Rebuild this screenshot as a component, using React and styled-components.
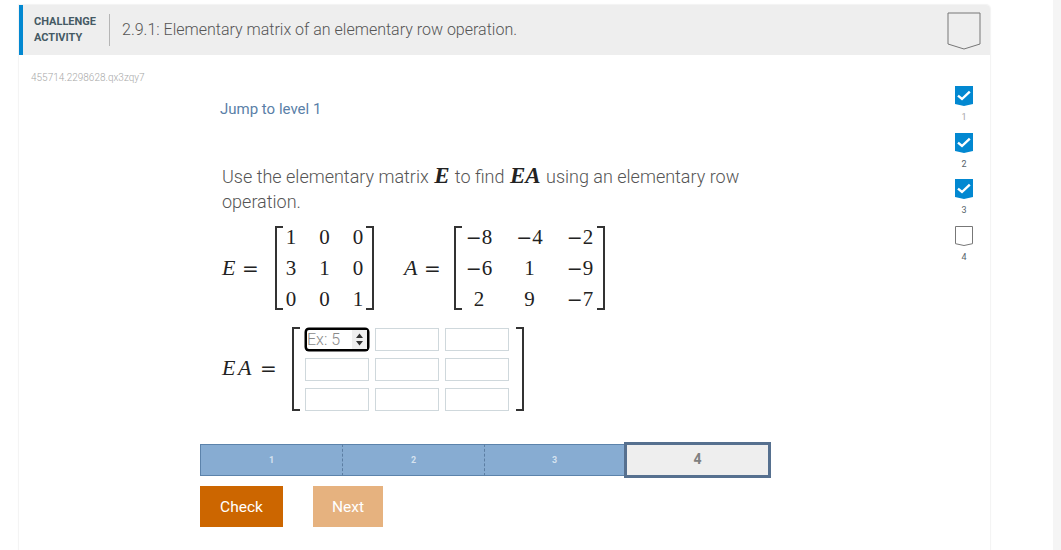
import React from "react";
import styled, { createGlobalStyle } from "styled-components";

const Global = createGlobalStyle`
  html, body { margin: 0; padding: 0; background: #fff; height: 550px; overflow: hidden; }
  body { font-family: Roboto, "Liberation Sans", sans-serif; color: #4a4a4a; }
  * { box-sizing: border-box; }
`;

const Page = styled.div`
  display: flex;
  width: 1061px;
  height: 550px;
  overflow: hidden;
`;
const Card = styled.section`
  width: 971px;
  margin: 5px 0 0 19px;
  height: 560px;
  background: #fff;
  border-radius: 0 4px 0 0;
  box-shadow: 0 0 1px 1px #f3f3f3;
  display: flex;
  flex-direction: column;
`;
const Gutter = styled.div`
  width: 8px;
  margin-left: 63px;
  background: #f5f5f5;
`;
const Header = styled.header`
  height: 50px;
  flex: none;
  background: #eeeeee;
  border-left: 4px solid #0288d1;
  border-radius: 0 4px 0 0;
  display: flex;
  align-items: center;
  padding-left: 11px;
`;
const Kind = styled.div`
  width: 75px;
  font: 700 11px/16px Roboto, sans-serif;
  color: #455a64;
`;
const Rule = styled.div`
  width: 1px;
  height: 32px;
  background: #b5b5b5;
  margin-right: 12px;
`;
const Title = styled.h1`
  margin: 0;
  flex: 1;
  font: 300 16px/20px Roboto, sans-serif;
  color: #555;
`;
const BigRibbon = styled.svg`
  width: 34px;
  height: 38px;
  margin-right: 9px;
  margin-top: 1px;
`;
const Body = styled.div`
  display: flex;
  flex: 1;
`;
const Main = styled.div`
  flex: 1;
  padding-top: 17px;
`;
const Seed = styled.div`
  font: 300 10px/12px Roboto, sans-serif;
  color: #a8a8a8;
  padding-left: 12px;
`;
const Exercise = styled.div`
  width: 571px;
  margin-left: 181px;
  padding-top: 14px;
`;
const Jump = styled.div`
  font: 400 15px/20px Roboto, sans-serif;
  color: #5a7fa8;
  margin: 1px 0 0 20px;
  height: 20px;
`;
const Prompt = styled.p`
  margin: 45px 0 0 22px;
  width: 530px;
  font: 300 18px/25px Roboto, sans-serif;
  color: #555;
`;
const MathVar = styled.span`
  font: italic 700 23px/20px "Liberation Serif", serif;
  color: #222;
  margin: 0 1px;
`;
const Equations = styled.div`
  display: flex;
  align-items: center;
  margin: 12px 0 0 22px;
  height: 84px;
  font-family: "Liberation Serif", serif;
  font-size: 21px;
  color: #222;
`;
const Lhs = styled.span`
  width: ${(p) => p.$w}px;
  margin-left: ${(p) => p.$ml || 0}px;
  padding-bottom: ${(p) => p.$pb || 0}px;
  flex: none;
  white-space: nowrap;
  display: flex;
  align-items: baseline;
  color: #222;
`;
const Ital = styled.i`
  font: italic 400 22px/1 "Liberation Serif", serif;
  letter-spacing: ${(p) => p.$ls ?? 1.5}px;
`;
const Op = styled.span`
  font: 400 20px/1 "DejaVu Sans", sans-serif;
  margin-left: ${(p) => p.$ml ?? 5}px;
`;
const Bracketed = styled.div`
  display: flex;
  align-self: stretch;
  flex: none;
`;
const Bracket = styled.div`
  width: 8px;
  flex: none;
  border: solid #333;
  border-width: 2px 0 2px 2px;
  ${(p) => p.$right && "border-width: 2px 2px 2px 0;"}
`;
const Matrix = styled.div`
  display: grid;
  grid-template-columns: repeat(3, ${(p) => p.$col}px);
  column-gap: ${(p) => p.$gap}px;
  grid-auto-rows: 31px;
  align-items: center;
  justify-items: center;
  padding: 0 ${(p) => p.$pad}px;
  align-content: center;
  font-size: 21px;
  line-height: 1;
`;
const Entry = styled.span`
  white-space: nowrap;
`;
const Minus = styled.span`
  font-family: "DejaVu Sans", sans-serif;
  font-size: 19px;
`;
const Answer = styled.div`
  display: flex;
  align-items: center;
  height: 84px;
  margin: 17px 0 0 22px;
`;
const InputGrid = styled.div`
  display: grid;
  grid-template-columns: repeat(3, 64px);
  grid-auto-rows: 23px;
  gap: 7px 6px;
  padding: 1px 7px 0 5px;
`;
const Cell = styled.input`
  width: 64px;
  height: 23px;
  padding: 0 2px;
  margin: 0;
  background: #fff;
  border: 1px solid #cfd8dc;
  border-radius: 0;
  outline: none;
  font: 300 15px/21px Roboto, sans-serif;
`;
const Focused = styled.div`
  position: relative;
  width: 64px;
  height: 23px;
  border: 2px solid #000;
  border-radius: 4px;
  background: #fff;
  box-shadow: 0 0 0 0.5px #000;
  font: 300 16px/19px Roboto, sans-serif;
  color: #8a8a8a;
  padding-left: 0;
`;
const Spin = styled.svg`
  position: absolute;
  right: 0;
  top: 0;
  width: 15px;
  height: 19px;
  background: #efefef;
`;
const Progress = styled.div`
  display: flex;
  align-items: center;
  height: 36px;
  margin-top: 31px;
`;
const Segment = styled.div`
  width: ${(p) => p.$w}px;
  height: 32px;
  flex: none;
  background: #87acd2;
  border: solid #5c83ab;
  border-width: 1px 0 1px ${(p) => (p.$first ? 1 : 0)}px;
  ${(p) => !p.$first && "border-left: 1px dashed #5c7ea3;"}
  color: #d5e2ef;
  font: 700 9px/30px Roboto, sans-serif;
  text-align: center;
`;
const Current = styled.div`
  width: 147px;
  height: 36px;
  flex: none;
  background: #eeeeee;
  border: 3px solid #56708f;
  color: #808080;
  font: 700 14px/28px Roboto, sans-serif;
  text-align: center;
`;
const Actions = styled.div`
  display: flex;
  gap: 30px;
  margin-top: 8px;
`;
const Button = styled.button`
  width: ${(p) => p.$w}px;
  height: 41px;
  border: none;
  padding: 2px 0 0;
  background: ${(p) => p.$bg};
  color: #fff;
  font: 400 15.5px/39px Roboto, sans-serif;
`;
const Rail = styled.aside`
  width: 52px;
  flex: none;
  padding-top: 31px;
  padding-right: 17px;
  display: flex;
  flex-direction: column;
  align-items: flex-end;
`;
const Level = styled.div`
  width: 18px;
  height: 46.5px;
  display: flex;
  flex-direction: column;
  align-items: center;
`;
const LevelNum = styled.span`
  font: 400 9px/10px Roboto, sans-serif;
  color: ${(p) => p.$c || "#56616a"};
  margin-top: 6px;
`;
const Mini = styled.svg`
  width: 18px;
  height: 20px;
  flex: none;
`;

const Done = () => (
  <Mini viewBox="0 0 18 20">
    <path d="M0 0H18V18L9 20L0 18Z" fill="#0288d1" />
    <path d="M3 9.6L7 13L14.8 5.6" fill="none" stroke="#fff" strokeWidth="2.4" />
  </Mini>
);
const Todo = () => (
  <Mini viewBox="0 0 18 20">
    <path d="M.5.5H17.5V17.7L9 19.5L.5 17.7Z" fill="#fff" stroke="#777" />
  </Mini>
);

const E = [["1", "0", "0"], ["3", "1", "0"], ["0", "0", "1"]];
const A = [["-8", "-4", "-2"], ["-6", "1", "-9"], ["2", "9", "-7"]];

const Value = ({ v }) =>
  v[0] === "-" ? (
    <Entry>
      <Minus>−</Minus>
      {v.slice(1)}
    </Entry>
  ) : (
    <Entry>{v}</Entry>
  );

const Grid = ({ rows, col, gap, pad }) => (
  <Bracketed>
    <Bracket />
    <Matrix $col={col} $gap={gap} $pad={pad}>
      {rows.flat().map((v, i) => (
        <Value key={i} v={v} />
      ))}
    </Matrix>
    <Bracket $right />
  </Bracketed>
);

export default function App() {
  return (
    <Page>
      <Global />
      <Card>
        <Header>
          <Kind>CHALLENGE ACTIVITY</Kind>
          <Rule />
          <Title>2.9.1: Elementary matrix of an elementary row operation.</Title>
          <BigRibbon viewBox="0 0 34 38">
            <path d="M1 1H33V32L17 37L1 32Z" fill="#eee" stroke="#777" />
          </BigRibbon>
        </Header>
        <Body>
          <Main>
            <Seed>455714.2298628.qx3zqy7</Seed>
            <Exercise>
              <Jump>Jump to level 1</Jump>
              <Prompt>
                Use the elementary matrix <MathVar>E</MathVar> to find <MathVar>EA</MathVar> using an elementary row operation.
              </Prompt>
              <Equations>
                <Lhs $w={53}>
                  <Ital>E</Ital>
                  <Op>=</Op>
                </Lhs>
                <Grid rows={E} col={16} gap={17.5} pad={0} />
                <Lhs $w={50} $ml={30}>
                  <Ital>A</Ital>
                  <Op>=</Op>
                </Lhs>
                <Grid rows={A} col={26} gap={24.5} pad={4} />
              </Equations>
              <Answer>
                <Lhs $w={70} $pb={2}>
                  <Ital $ls={2.5}>EA</Ital>
                  <Op $ml={6}>=</Op>
                </Lhs>
                <Bracketed>
                  <Bracket />
                  <InputGrid>
                    <Focused>
                      Ex: 5
                      <Spin viewBox="0 0 15 19">
                        <path d="M7.5 3.5L11 8H4Z M7.5 15.5L4 11H11Z" fill="#333" />
                      </Spin>
                    </Focused>
                    {Array.from({ length: 8 }).map((_, i) => (
                      <Cell key={i} type="text" aria-label={`cell ${i + 2}`} />
                    ))}
                  </InputGrid>
                  <Bracket $right />
                </Bracketed>
              </Answer>
              <Progress>
                <Segment $first $w={142}>1</Segment>
                <Segment $w={142}>2</Segment>
                <Segment $w={140}>3</Segment>
                <Current>4</Current>
              </Progress>
              <Actions>
                <Button $w={83} $bg="#cc6600">Check</Button>
                <Button $w={70} $bg="#e6b27f">Next</Button>
              </Actions>
            </Exercise>
          </Main>
          <Rail>
            <Level><Done /><LevelNum $c="#a6a6a6">1</LevelNum></Level>
            <Level><Done /><LevelNum>2</LevelNum></Level>
            <Level><Done /><LevelNum>3</LevelNum></Level>
            <Level><Todo /><LevelNum>4</LevelNum></Level>
          </Rail>
        </Body>
      </Card>
      <Gutter />
    </Page>
  );
}
